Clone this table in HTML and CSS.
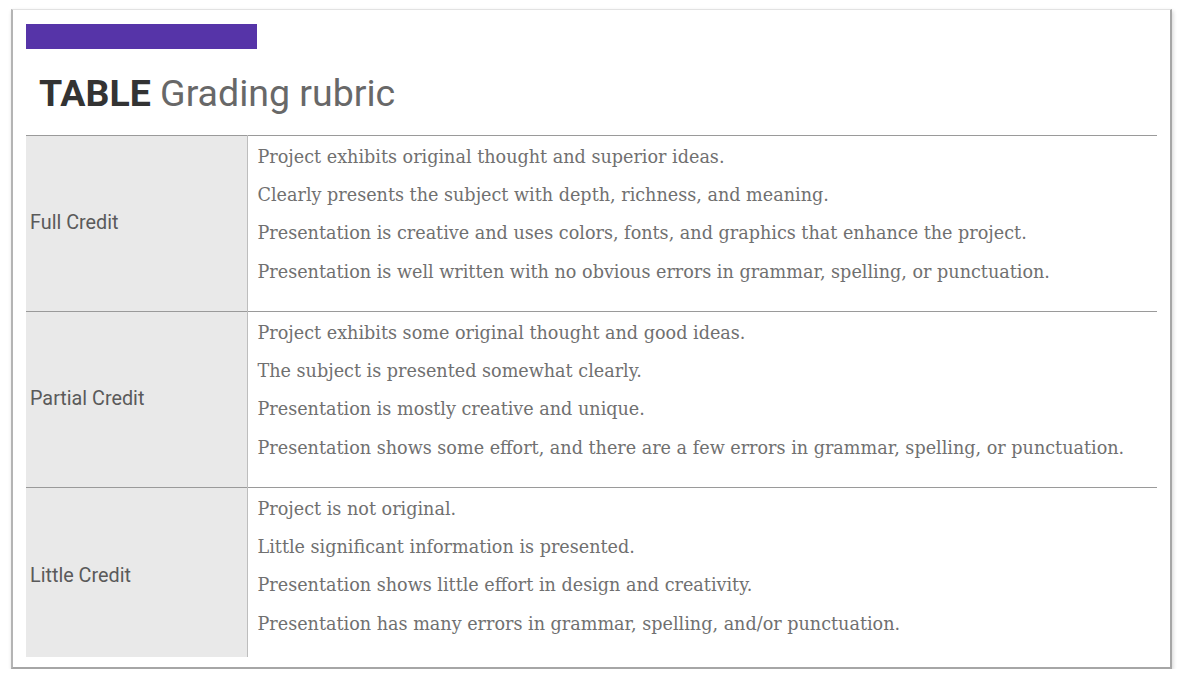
FILE: index.html
```html
<!DOCTYPE html>
<html>
<head>
<meta charset="utf-8">
<link rel="stylesheet" href="styles.css">
</head>
<body>
<div class="card">
  <div class="accent"></div>
  <h1 class="title"><b>TABLE</b> Grading rubric</h1>
  <table class="rubric">
    <tr>
      <th>Full Credit</th>
      <td>
        <p>Project exhibits original thought and superior ideas.</p>
        <p>Clearly presents the subject with depth, richness, and meaning.</p>
        <p>Presentation is creative and uses colors, fonts, and graphics that enhance the project.</p>
        <p>Presentation is well written with no obvious errors in grammar, spelling, or punctuation.</p>
      </td>
    </tr>
    <tr>
      <th>Partial Credit</th>
      <td>
        <p>Project exhibits some original thought and good ideas.</p>
        <p>The subject is presented somewhat clearly.</p>
        <p>Presentation is mostly creative and unique.</p>
        <p>Presentation shows some effort, and there are a few errors in grammar, spelling, or punctuation.</p>
      </td>
    </tr>
    <tr class="last">
      <th>Little Credit</th>
      <td>
        <p>Project is not original.</p>
        <p>Little significant information is presented.</p>
        <p>Presentation shows little effort in design and creativity.</p>
        <p>Presentation has many errors in grammar, spelling, and/or punctuation.</p>
      </td>
    </tr>
  </table>
</div>
</body>
</html>
```
FILE: styles.css
```css
html, body {
  margin: 0;
  padding: 0;
  background: #ffffff;
}
.card {
  box-sizing: border-box;
  margin: 9px 0 0 11px;
  width: 1161px;
  height: 660px;
  border-top: 1px solid #e2e2e2;
  border-left: 2px solid #b4b4b4;
  border-right: 2px solid #a6a6a6;
  border-bottom: 2px solid #a6a6a6;
  box-shadow: 1px 2px 4px rgba(0,0,0,0.18);
  padding: 14px 12px 0 13px;
  background: #fff;
}
.accent {
  width: 231px;
  height: 25px;
  background: #5634a8;
}
.title {
  margin: 21px 0 0 13px;
  font-family: Roboto, "Liberation Sans", sans-serif;
  font-size: 37.5px;
  line-height: 46px;
  font-weight: 400;
  color: #686868;
  height: 65px;
}
.title b {
  font-weight: 700;
  color: #333333;
}
.rubric {
  width: 1131px;
  border-collapse: collapse;
  border-top: 1px solid #9a9a9a;
}
.rubric tr {
  border-bottom: 1px solid #9a9a9a;
  height: 176px;
}
.rubric tr.last {
  border-bottom: none;
  height: 169px;
}
.rubric th {
  width: 221px;
  box-sizing: border-box;
  background: #e9e9e9;
  border-right: 1px solid #bdbdbd;
  text-align: left;
  font-family: Roboto, "Liberation Sans", sans-serif;
  font-weight: 400;
  font-size: 19.8px;
  color: #5a5a5a;
  padding: 0 0 2px 4px;
  vertical-align: middle;
}
.rubric tr.last th {
  padding-top: 6px;
  padding-bottom: 0;
}
.rubric td {
  vertical-align: top;
  padding: 2px 0 0 10px;
}
.rubric td p {
  margin: 0;
  font-family: "DejaVu Serif", "Liberation Serif", serif;
  font-size: 17.6px;
  line-height: 38.2px;
  color: #707070;
  white-space: nowrap;
}
```
